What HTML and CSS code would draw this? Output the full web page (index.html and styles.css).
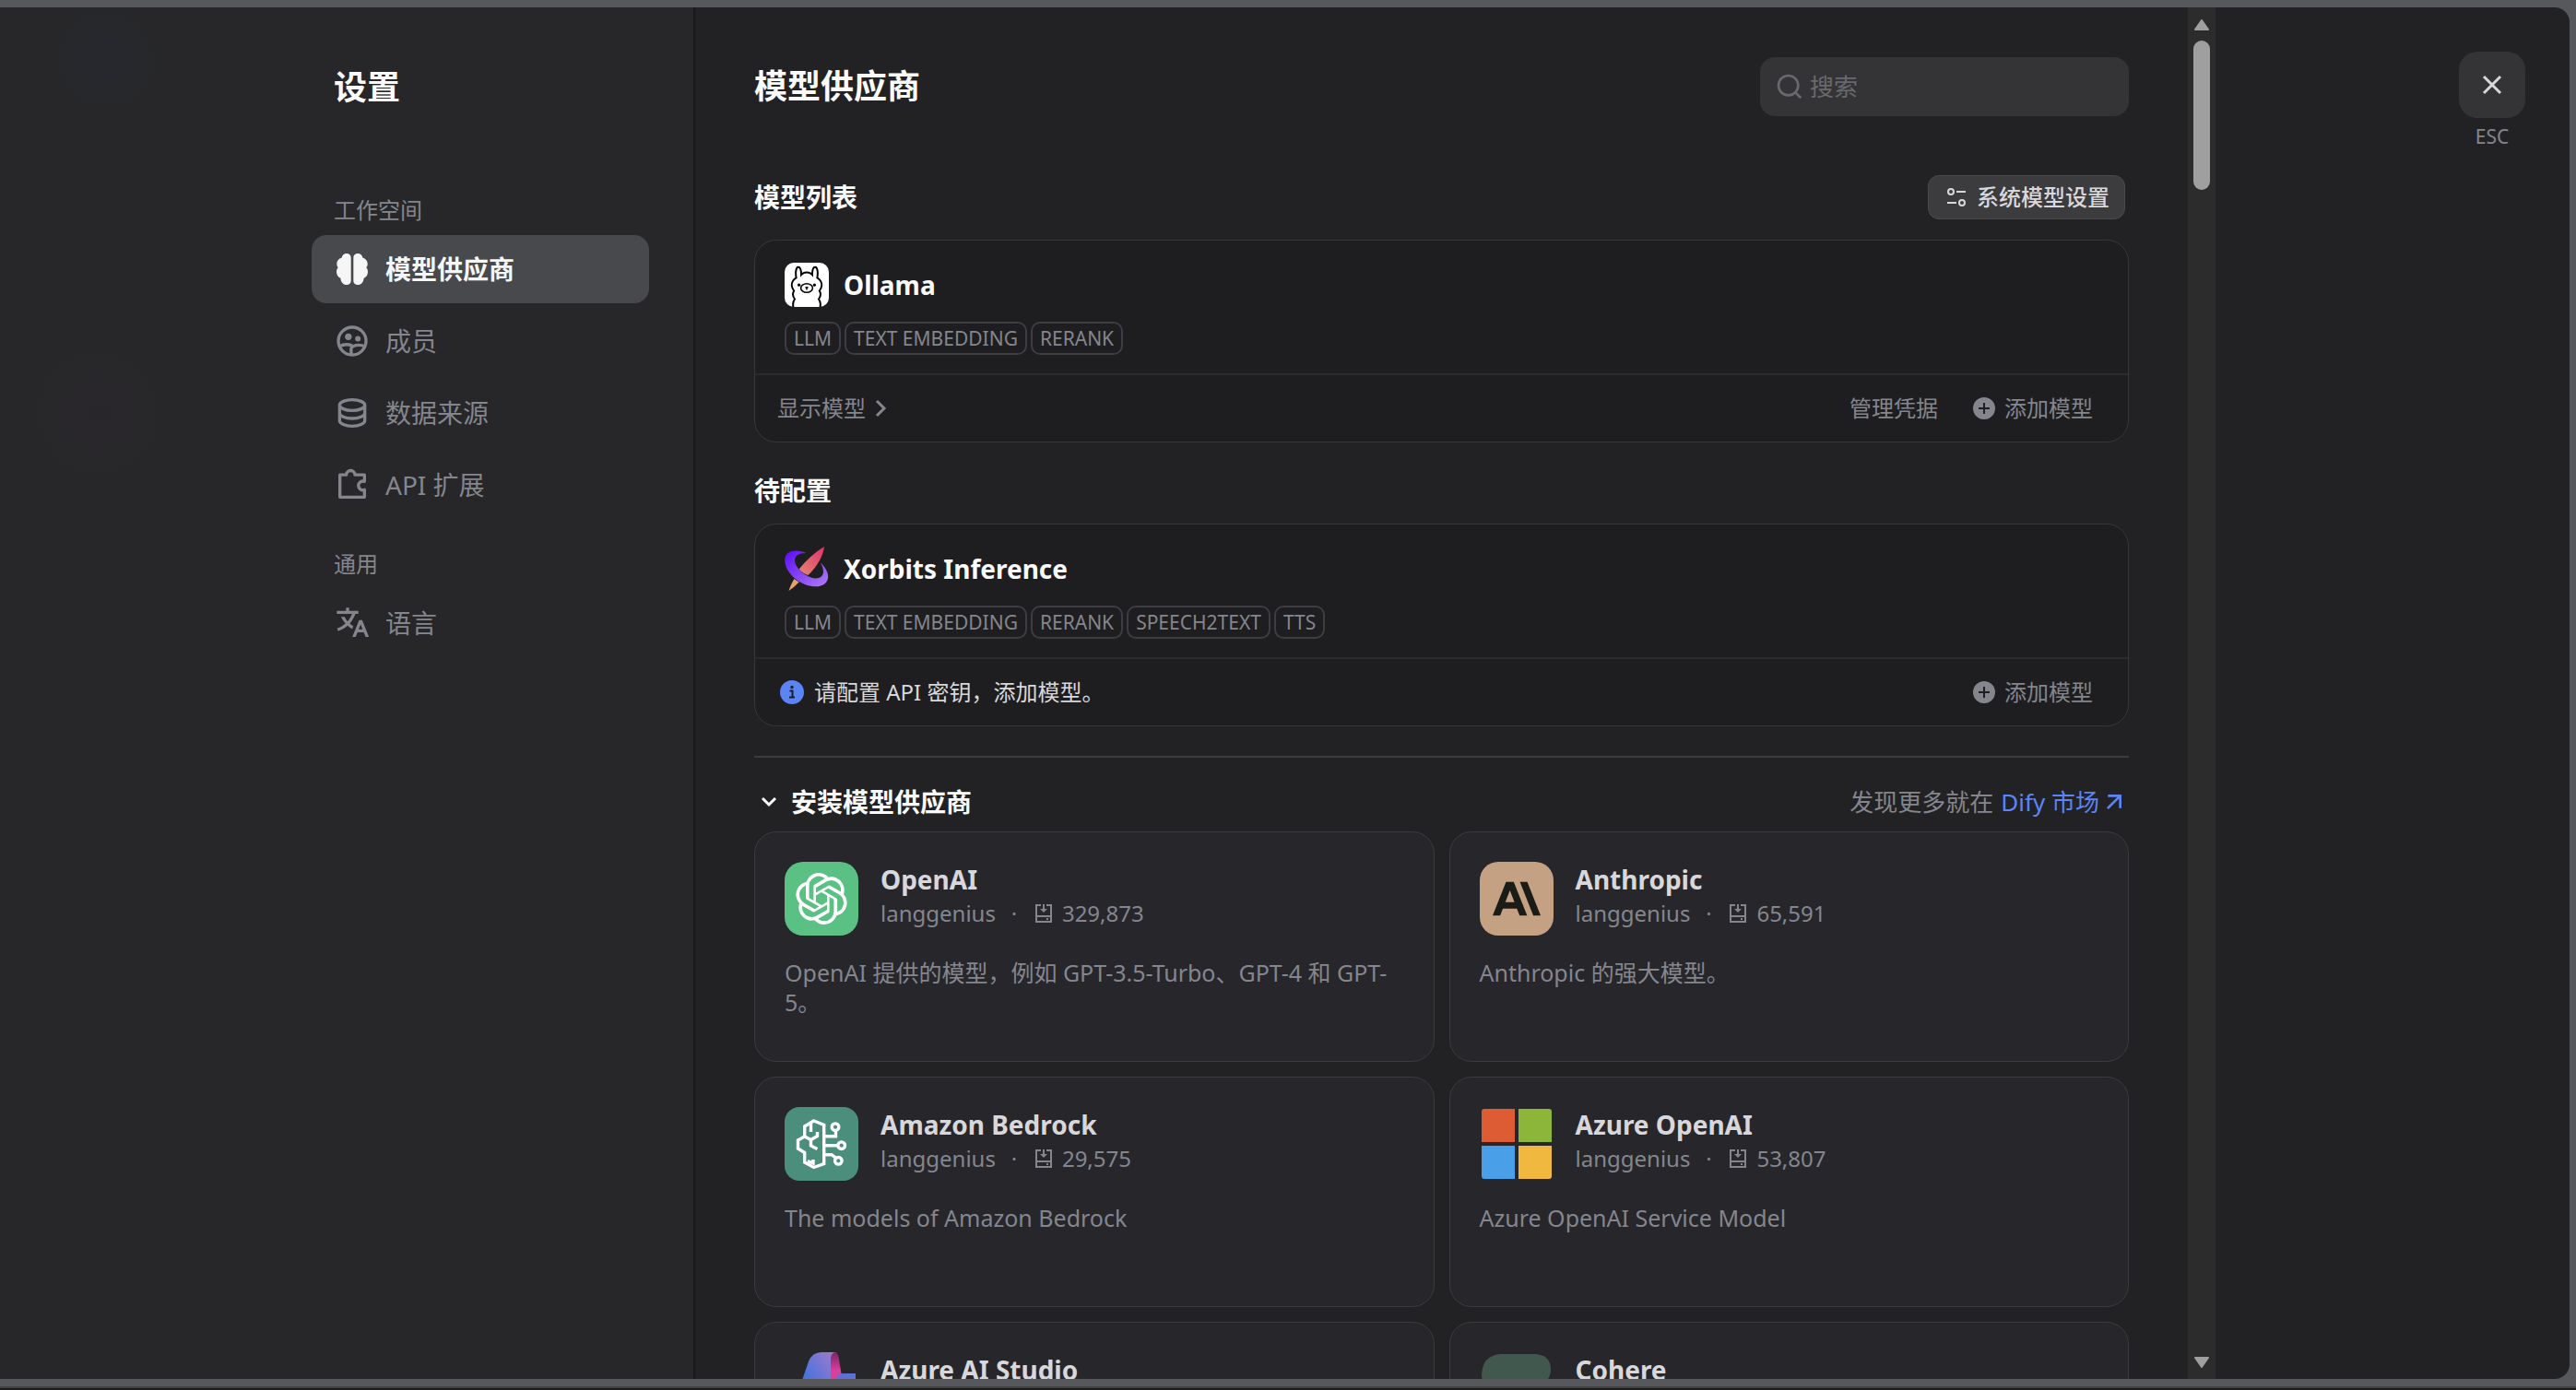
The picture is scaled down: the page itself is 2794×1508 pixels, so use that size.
FILE: index.html
```
<!DOCTYPE html>
<html lang="zh-CN">
<head>
    <meta charset="UTF-8">
    <meta name="viewport" content="width=device-width, initial-scale=1.0">
    <title>设置 - 模型供应商</title>
    <link rel="stylesheet" href="styles.css">
</head>
<body>
    <div class="settings">
        <aside class="sidebar">
            <h1 class="page-title">设置</h1>
            <nav class="menu">
                <div class="menu-label">工作空间</div>
                <a class="menu-item active" href="#provider">
                    <svg class="menu-icon" viewBox="0 0 24 24" fill="currentColor">
                        <path d="M11.2 4.5C11.2 2.8 9.9 1.8 8.4 1.8C6.7 1.8 5.4 2.9 5.2 4.5C3.4 5 2 6.6 2 8.6C2 9.6 2.3 10.3 2.8 11C2.2 11.7 1.8 12.7 1.8 13.8C1.8 15.7 2.9 17.2 4.4 17.8C4.6 20.4 6.2 22.2 8.4 22.2C10.1 22.2 11.2 21 11.2 19.6Z"/>
                        <path d="M12.8 4.5C12.8 2.8 14.1 1.8 15.6 1.8C17.3 1.8 18.6 2.9 18.8 4.5C20.6 5 22 6.6 22 8.6C22 9.6 21.7 10.3 21.2 11C21.8 11.7 22.2 12.7 22.2 13.8C22.2 15.7 21.1 17.2 19.6 17.8C19.4 20.4 17.8 22.2 15.6 22.2C13.9 22.2 12.8 21 12.8 19.6Z"/>
                    </svg>
                    模型供应商
                </a>
                <a class="menu-item" href="#members">
                    <svg class="menu-icon" viewBox="0 0 24 24" fill="none" stroke="currentColor" stroke-width="2">
                        <circle cx="12" cy="12" r="9"/>
                        <circle cx="9.5" cy="9.2" r="2.2" fill="currentColor" stroke="none"/>
                        <circle cx="15.7" cy="10.5" r="1.8" fill="currentColor" stroke="none"/>
                        <path d="M3.8 15.4C6 14.2 9.2 14 12 14.9M11.3 20.6V17.2C11.3 15.6 14 14.6 16.2 14.6C17.8 14.6 19.2 14.9 20.2 15.5"/>
                    </svg>
                    成员
                </a>
                <a class="menu-item" href="#datasource">
                    <svg class="menu-icon" viewBox="0 0 24 24" fill="none" stroke="currentColor" stroke-width="2">
                        <ellipse cx="12" cy="6.9" rx="8.2" ry="3.5"/>
                        <path d="M3.8 7v10c0 2 3.7 3.6 8.2 3.6s8.2-1.6 8.2-3.6V7M3.8 12c0 2 3.7 3.6 8.2 3.6s8.2-1.6 8.2-3.6"/>
                    </svg>
                    数据来源
                </a>
                <a class="menu-item" href="#api">
                    <svg class="menu-icon" viewBox="0 0 24 24" fill="none" stroke="currentColor" stroke-width="2" stroke-linejoin="round">
                        <path d="M4 5.500h4.200a2.800 2.800 0 1 1 5.600 0H20v4.300a2.900 2.900 0 1 0 0 5.400v4.800H4z"/>
                    </svg>
                    API 扩展
                </a>
                <div class="menu-label">通用</div>
                <a class="menu-item" href="#language">
                    <svg class="menu-icon" viewBox="0 0 24 24" fill="currentColor">
                        <path d="M18.5 10L22.9 21H20.745L19.544 18H15.454L14.255 21H12.101L16.5 10H18.5ZM10 2V4H16V6L14.0322 6.0006C13.2425 8.36616 11.9988 10.5057 10.4115 12.301C11.1344 12.9457 11.917 13.5176 12.7475 14.0079L11.9969 15.8855C10.9237 15.2781 9.91944 14.5524 8.99961 13.7249C7.21403 15.332 5.10914 16.5553 2.79891 17.2734L2.26257 15.3442C4.2385 14.7203 6.04543 13.6737 7.59042 12.3021C6.46277 11.0281 5.50873 9.57985 4.76742 8.00028L7.00684 8.00037C7.57018 9.03885 8.23979 10.0033 8.99967 10.877C10.2283 9.46508 11.2205 7.81616 11.9095 6.00101L2 6V4H8V2H10ZM17.5 12.8852L16.253 16H18.745L17.5 12.8852Z"/>
                    </svg>
                    语言
                </a>
            </nav>
        </aside>

        <main class="content">
            <header class="content-header">
                <h2 class="page-title">模型供应商</h2>
                <label class="search">
                    <svg class="search-icon" viewBox="0 0 24 24" fill="none" stroke="currentColor" stroke-width="2">
                        <circle cx="11" cy="11" r="8"/>
                        <path d="M16.8 16.8L21.2 21.2"/>
                    </svg>
                    <input type="text" placeholder="搜索" aria-label="搜索">
                </label>
            </header>

            <div class="section-row">
                <h3 class="section-title">模型列表</h3>
                <button class="system-btn">
                    <svg class="system-icon" viewBox="0 0 28 28" fill="none" stroke="currentColor" stroke-width="2">
                        <circle cx="8" cy="8" r="3"/>
                        <path d="M14 8H24M4 20H14"/>
                        <circle cx="20" cy="20" r="3"/>
                    </svg>
                    系统模型设置
                </button>
            </div>

            <section class="model-card">
                <div class="model-info">
                    <div class="model-name">
                        <svg class="model-logo" viewBox="0 0 48 48" fill="none" stroke="#000" stroke-width="2">
                            <rect width="48" height="48" rx="10" fill="#fff" stroke="none"/>
                            <path d="M9.5 48C8.5 44 9.5 41.5 11 39.5C8.8 36.5 8.6 33 10.2 30.5C7.5 27 7 22.5 9.2 19.5C10.2 18 11.4 17 12.6 16.4C11.6 11 12.2 5 14.8 4.8C17.4 4.8 18 9 18 13C20.8 9.6 27.2 9.6 30 13C30 9 30.6 4.8 33.2 4.8C35.8 5 36.4 11 35.4 16.4C36.6 17 37.8 18 38.8 19.5C41 22.5 40.5 27 37.8 30.5C39.4 33 39.2 36.5 37 39.5C38.5 41.5 39.5 44 38.5 48"/>
                            <ellipse cx="24" cy="27.5" rx="6.4" ry="4.8" stroke-width="1.5"/>
                            <path d="M22.6 26.4L24 27.6L25.4 26.4M24 27.6V29.4" stroke-width="1.4"/>
                            <circle cx="15.6" cy="24.2" r="1.6" fill="#000" stroke="none"/>
                            <circle cx="32.4" cy="24.2" r="1.6" fill="#000" stroke="none"/>
                        </svg>
                        Ollama
                    </div>
                    <ul class="tags">
                        <li>LLM</li>
                        <li>TEXT EMBEDDING</li>
                        <li>RERANK</li>
                    </ul>
                </div>
                <div class="model-footer">
                    <button class="text-btn show-btn">
                        显示模型
                        <svg class="small-icon" viewBox="0 0 24 24" fill="none" stroke="currentColor" stroke-width="3"><path d="M6 4L14 12L6 20"/></svg>
                    </button>
                    <div class="actions">
                        <button class="text-btn">管理凭据</button>
                        <button class="text-btn">
                            <svg class="add-icon" viewBox="0 0 24 24">
                                <circle cx="12" cy="12" r="12" fill="currentColor"/>
                                <path d="M12 6V18M6 12H18" stroke="#1e1e20" stroke-width="2"/>
                            </svg>
                            添加模型
                        </button>
                    </div>
                </div>
            </section>

            <h3 class="section-title pending">待配置</h3>
            <section class="model-card">
                <div class="model-info">
                    <div class="model-name">
                        <svg class="model-logo" viewBox="0 0 48 48">
                            <defs>
                                <linearGradient id="ring" x1="0" y1="0" x2="1" y2="1">
                                    <stop offset="0" stop-color="#5a0cf5"/>
                                    <stop offset="1" stop-color="#b07cf5"/>
                                </linearGradient>
                                <linearGradient id="needle" x1="1" y1="0" x2="0" y2="1">
                                    <stop offset="0" stop-color="#e0336e"/>
                                    <stop offset="1" stop-color="#e2876c"/>
                                </linearGradient>
                            </defs>
                            <path fill="url(#ring)" d="M23.5 7C16 3.6 7 3.4 2.5 8C-3 15 2 28 13 36C23 43.5 37 46 44 40C50 34 47 25 39 17.5C43.5 26 43 32 37 34C30 36 19 30 13.5 22C9 15 10 7 23.5 7Z"/>
                            <path fill="url(#needle)" d="M43 0C42 9 36 21 25.5 31C22 30 18.5 27.5 15.7 24.5C23 15 33 6 43 0Z"/>
                            <path fill="#e9a06a" d="M10.5 35C12 36.5 14 37.5 15.7 38.3C12.5 42 8 46 4.5 48C6 43.5 8 38.5 10.5 35Z"/>
                        </svg>
                        Xorbits Inference
                    </div>
                    <ul class="tags">
                        <li>LLM</li>
                        <li>TEXT EMBEDDING</li>
                        <li>RERANK</li>
                        <li>SPEECH2TEXT</li>
                        <li>TTS</li>
                    </ul>
                </div>
                <div class="model-footer">
                    <p class="notice">
                        <svg class="info-icon" viewBox="0 0 28 28">
                            <circle cx="14" cy="14" r="13" fill="#5b84f5"/>
                            <path d="M11.5 12.5H14.5V19M11 19.5H17" fill="none" stroke="#1e1e20" stroke-width="2"/>
                            <circle cx="14" cy="8.5" r="1.7" fill="#1e1e20"/>
                        </svg>
                        请配置 API 密钥，添加模型。
                    </p>
                    <div class="actions">
                        <button class="text-btn">
                            <svg class="add-icon" viewBox="0 0 24 24">
                                <circle cx="12" cy="12" r="12" fill="currentColor"/>
                                <path d="M12 6V18M6 12H18" stroke="#1e1e20" stroke-width="2"/>
                            </svg>
                            添加模型
                        </button>
                    </div>
                </div>
            </section>

            <hr class="divider">

            <div class="section-row install-row">
                <h3 class="section-title">
                    <button class="collapse-btn">
                        <svg class="collapse-icon" viewBox="0 0 24 24" fill="none" stroke="currentColor" stroke-width="3"><path d="M5 8L12 15L19 8"/></svg>
                        安装模型供应商
                    </button>
                </h3>
                <p class="discover">
                    <span>发现更多就在</span>
                    <a href="#marketplace">Dify 市场<svg class="arrow-icon" viewBox="0 0 24 24" fill="currentColor"><path d="M16.0037 9.41421L7.39712 18.0208L5.98291 16.6066L14.5895 8H7.00373V6H18.0037V17H16.0037V9.41421Z"/></svg></a>
                </p>
            </div>

            <svg class="symbols" aria-hidden="true">
                <symbol id="install" viewBox="0 0 24 24">
                    <path d="M9 2V4H5V14H19V4H15V2H21V22H3V2H9ZM19 16H5V20H19V16ZM17 17V19H15V17H17ZM13 2V7H16L12 11L8 7H11V2H13Z"/>
                </symbol>
            </svg>

            <div class="provider-grid">
                <article class="provider-card">
                    <div class="provider-head">
                        <svg class="provider-logo" viewBox="0 0 80 80">
                            <rect width="80" height="80" rx="20" fill="#5ac084"/>
                            <svg x="12" y="12" width="56" height="56" viewBox="0 0 24 24" fill="#fff">
                                <path d="M22.2819 9.8211a5.9847 5.9847 0 0 0-.5157-4.9108 6.0462 6.0462 0 0 0-6.5098-2.9A6.0651 6.0651 0 0 0 4.9807 4.1818a5.9847 5.9847 0 0 0-3.9977 2.9 6.0462 6.0462 0 0 0 .7427 7.0966 5.98 5.98 0 0 0 .511 4.9107 6.051 6.051 0 0 0 6.5146 2.9001A5.9847 5.9847 0 0 0 13.2599 24a6.0557 6.0557 0 0 0 5.7718-4.2058 5.9894 5.9894 0 0 0 3.9977-2.9001 6.0557 6.0557 0 0 0-.7475-7.0729zm-9.022 12.6081a4.4755 4.4755 0 0 1-2.8764-1.0408l.1419-.0804 4.7783-2.7582a.7948.7948 0 0 0 .3927-.6813v-6.7369l2.02 1.1686a.071.071 0 0 1 .038.052v5.5826a4.504 4.504 0 0 1-4.4945 4.4944zm-9.6607-4.1254a4.4708 4.4708 0 0 1-.5346-3.0137l.142.0852 4.783 2.7582a.7712.7712 0 0 0 .7806 0l5.8428-3.3685v2.3324a.0804.0804 0 0 1-.0332.0615L9.74 19.9502a4.4992 4.4992 0 0 1-6.1408-1.6464zM2.3408 7.8956a4.485 4.485 0 0 1 2.3655-1.9728V11.6a.7664.7664 0 0 0 .3879.6765l5.8144 3.3543-2.0201 1.1685a.0757.0757 0 0 1-.071 0l-4.8303-2.7865A4.504 4.504 0 0 1 2.3408 7.872zm16.5963 3.8558L13.1038 8.364 15.1192 7.2a.0757.0757 0 0 1 .071 0l4.8303 2.7913a4.4944 4.4944 0 0 1-.6765 8.1042v-5.6772a.79.79 0 0 0-.407-.667zm2.0107-3.0231l-.142-.0852-4.7735-2.7818a.7759.7759 0 0 0-.7854 0L9.409 9.2297V6.8974a.0662.0662 0 0 1 .0284-.0615l4.8303-2.7866a4.4992 4.4992 0 0 1 6.6802 4.66zM8.3065 12.863l-2.02-1.1638a.0804.0804 0 0 1-.038-.0567V6.0742a4.4992 4.4992 0 0 1 7.3757-3.4537l-.142.0805L8.704 5.459a.7948.7948 0 0 0-.3927.6813zm1.0976-2.3654l2.602-1.4998 2.6069 1.4998v2.9994l-2.5974 1.4997-2.6067-1.4997Z"/>
                            </svg>
                        </svg>
                        <div>
                            <h4 class="provider-name">OpenAI</h4>
                            <div class="provider-meta">langgenius<span class="dot">·</span><svg class="install-icon"><use href="#install"/></svg>329,873</div>
                        </div>
                    </div>
                    <p class="provider-desc">OpenAI 提供的模型，例如 GPT-3.5-Turbo、GPT-4 和 GPT-5。</p>
                </article>

                <article class="provider-card">
                    <div class="provider-head">
                        <svg class="provider-logo" viewBox="0 0 80 80">
                            <rect width="80" height="80" rx="20" fill="#c4a182"/>
                            <svg x="14" y="14" width="52" height="52" viewBox="0 0 24 24" fill="#1b1b18">
                                <path d="M17.3041 3.541h-3.6718l6.696 16.918H24Zm-10.6082 0L0 20.459h3.7442l1.3693-3.5527h7.0052l1.3693 3.5528h3.7442L10.5363 3.5409Zm-.3712 10.2232 2.2914-5.9456 2.2914 5.9456Z"/>
                            </svg>
                        </svg>
                        <div>
                            <h4 class="provider-name">Anthropic</h4>
                            <div class="provider-meta">langgenius<span class="dot">·</span><svg class="install-icon"><use href="#install"/></svg>65,591</div>
                        </div>
                    </div>
                    <p class="provider-desc">Anthropic 的强大模型。</p>
                </article>

                <article class="provider-card">
                    <div class="provider-head">
                        <svg class="provider-logo" viewBox="0 0 80 80" fill="none" stroke="#fff" stroke-width="3.4">
                            <rect width="80" height="80" rx="16" fill="#4b8e7c" stroke="none"/>
                            <path d="M31.7 15L42.7 19.5V61.5L31.7 65.5L21.7 60V49.5L14.5 45V36L21.7 32V21Z"/>
                            <path d="M28.5 18V27M21.7 32L28.5 35.5L35.5 31.5V27M28.5 35.5V42L35.5 45.5M25 58.5L31 61V57"/>
                            <path d="M42.7 31.7H55.5V26M42.7 41.7H57.5M42.7 51.7H51L56 55.5"/>
                            <circle cx="55" cy="21.7" r="3.8"/>
                            <circle cx="61.7" cy="41.7" r="3.8"/>
                            <circle cx="58.3" cy="58.3" r="3.8"/>
                        </svg>
                        <div>
                            <h4 class="provider-name">Amazon Bedrock</h4>
                            <div class="provider-meta">langgenius<span class="dot">·</span><svg class="install-icon"><use href="#install"/></svg>29,575</div>
                        </div>
                    </div>
                    <p class="provider-desc">The models of Amazon Bedrock</p>
                </article>

                <article class="provider-card">
                    <div class="provider-head">
                        <svg class="provider-logo" viewBox="0 0 80 80">
                            <path fill="#dd5c33" d="M5 2H38V38H2V5Q2 2 5 2Z"/>
                            <path fill="#8cb63a" d="M42 2H75Q78 2 78 5V38H42Z"/>
                            <path fill="#4aa0e8" d="M2 42H38V78H5Q2 78 2 75Z"/>
                            <path fill="#f1b840" d="M42 42H78V75Q78 78 75 78H42Z"/>
                        </svg>
                        <div>
                            <h4 class="provider-name">Azure OpenAI</h4>
                            <div class="provider-meta">langgenius<span class="dot">·</span><svg class="install-icon"><use href="#install"/></svg>53,807</div>
                        </div>
                    </div>
                    <p class="provider-desc">Azure OpenAI Service Model</p>
                </article>

                <article class="provider-card">
                    <div class="provider-head">
                        <svg class="provider-logo" viewBox="0 0 80 80">
                            <defs>
                                <linearGradient id="studio-blue" x1="1" y1="0" x2="0" y2="1">
                                    <stop offset="0" stop-color="#a57bc8"/>
                                    <stop offset="0.5" stop-color="#4673e0"/>
                                    <stop offset="1" stop-color="#2f7be8"/>
                                </linearGradient>
                                <linearGradient id="studio-pink" x1="0" y1="0" x2="0" y2="1">
                                    <stop offset="0" stop-color="#7c2468"/>
                                    <stop offset="0.4" stop-color="#d8409c"/>
                                </linearGradient>
                            </defs>
                            <path fill="url(#studio-blue)" d="M40 0H56L50 30V56Q50 80 26 80H10Q2 80 5 71L26 10Q30 0 40 0Z"/>
                            <path fill="url(#studio-pink)" d="M56 0Q50 0 50 8V50H66L60 14Q58 0 56 0Z"/>
                            <path fill="#5b70d8" d="M62 23H77V58Q77 66 68 66H50V50Q54 23 62 23Z"/>
                        </svg>
                        <h4 class="provider-name">Azure AI Studio</h4>
                    </div>
                </article>

                <article class="provider-card">
                    <div class="provider-head">
                        <svg class="provider-logo" viewBox="0 0 80 80">
                            <path fill="#40584d" d="M22 2H60Q77 3 77 19Q77 32 62 37Q46 43 26 43Q2 42 2 24Q3 4 22 2Z"/>
                        </svg>
                        <h4 class="provider-name">Cohere</h4>
                    </div>
                </article>
            </div>
        </main>

        <div class="scrollbar" aria-hidden="true">
            <svg class="scroll-arrow" viewBox="0 0 16 12"><path d="M8 1L15 11H1Z" stroke-width="2" stroke-linejoin="round"/></svg>
            <div class="scroll-thumb"></div>
            <svg class="scroll-arrow down" viewBox="0 0 16 12"><path d="M8 11L15 1H1Z" stroke-width="2" stroke-linejoin="round"/></svg>
        </div>

        <div class="close-area">
            <button class="close-btn" aria-label="关闭">
                <svg class="close-icon" viewBox="0 0 24 24" fill="none" stroke="currentColor" stroke-width="3"><path d="M3 3L21 21M21 3L3 21"/></svg>
            </button>
            <div class="close-hint">ESC</div>
        </div>
    </div>
    <div class="window-edge"></div>
</body>
</html>
```
FILE: styles.css
```
* {
    box-sizing: border-box;
    margin: 0;
    padding: 0;
}
body {
    display: flex;
    flex-direction: column;
    height: 100vh;
    padding-top: 8px;
    overflow: hidden;
    background: #57585c;
    color: #fbfbfc;
    font-family: "Noto Sans", "Noto Sans CJK SC", sans-serif;
    font-size: 24px;
    line-height: 32px;
}
button {
    border: none;
    background: none;
    color: inherit;
    font: inherit;
    cursor: pointer;
}
a {
    text-decoration: none;
}
ul {
    list-style: none;
}
svg {
    flex-shrink: 0;
}

.settings {
    display: grid;
    grid-template-columns: 754px minmax(0, 1fr) 30px 384px;
    flex: 1;
    min-height: 0;
    margin-right: 7px;
    margin-bottom: 8px;
    overflow: hidden;
    border-radius: 0 16px 16px 0;
    background: #222224;
}
.window-edge {
    height: 4px;
    border-top: 2px solid #414143;
    background: #1b1b1b;
}
.page-title {
    font-size: 36px;
    font-weight: 700;
    line-height: 48px;
}

/* sidebar */
.sidebar {
    padding: 63px 48px 0 338px;
    border-right: 2px solid #19191b;
    background:
        radial-gradient(circle at 116px 56px, #26282e, transparent 60px),
        radial-gradient(circle at 106px 440px, #29262b, transparent 70px),
        #272729;
}
.sidebar .page-title {
    padding-left: 24px;
}
.menu {
    display: flex;
    flex-direction: column;
    gap: 4px;
    padding-top: 64px;
}
.menu-label {
    padding: 29px 24px 7px;
    color: #85868d;
}
.menu-item {
    display: flex;
    align-items: center;
    gap: 16px;
    height: 74px;
    padding: 0 24px;
    border-radius: 16px;
    color: #85868d;
    font-size: 28px;
}
.menu-item.active {
    background: #48494c;
    color: #f6f6f7;
    font-weight: 700;
}
.menu-icon {
    width: 40px;
    height: 40px;
}

/* content */
.content {
    padding: 54px 64px 0;
    overflow: hidden;
}
.content-header {
    display: flex;
    align-items: center;
    justify-content: space-between;
    margin-bottom: 64px;
}
.search {
    display: flex;
    align-items: center;
    gap: 6px;
    width: 400px;
    height: 64px;
    padding: 0 16px;
    border-radius: 16px;
    background: #343436;
    color: #68696f;
}
.search-icon {
    width: 32px;
    height: 32px;
}
.search input {
    flex: 1;
    min-width: 0;
    border: none;
    outline: none;
    background: none;
    color: #fbfbfc;
    font: inherit;
    font-size: 26px;
}
.search input::placeholder {
    color: #68696f;
}
.section-row {
    display: flex;
    align-items: center;
    justify-content: space-between;
    margin-bottom: 22px;
}
.section-title {
    font-size: 28px;
    font-weight: 700;
    line-height: 40px;
}
.pending {
    margin: 32px 0 16px;
}
.system-btn {
    display: flex;
    align-items: center;
    gap: 8px;
    height: 48px;
    margin-right: 4px;
    padding: 0 16px;
    border: 1px solid #4b4b4e;
    border-radius: 12px;
    background: #3c3c3e;
    color: #d8d8dc;
    font-weight: 500;
}
.system-icon {
    width: 28px;
    height: 28px;
}

/* installed models */
.model-card {
    border: 1px solid #37373a;
    border-radius: 24px;
    background: #1e1e20;
}
.model-info {
    padding: 24px 32px 20px;
    border-bottom: 2px solid #2b2b2d;
}
.model-name {
    display: flex;
    align-items: center;
    gap: 16px;
    height: 48px;
    margin-bottom: 16px;
    font-size: 28px;
    font-weight: 700;
}
.model-logo {
    width: 48px;
    height: 48px;
}
.tags {
    display: flex;
    gap: 4px;
}
.tags li {
    height: 36px;
    padding: 0 8px;
    border: 2px solid #3d3d43;
    border-radius: 10px;
    color: #85868d;
    font-size: 21px;
}
.model-footer {
    display: flex;
    align-items: center;
    justify-content: space-between;
    height: 72px;
    padding: 0 38px 0 24px;
}
.actions {
    display: flex;
    gap: 38px;
}
.text-btn {
    display: flex;
    align-items: center;
    gap: 10px;
    color: #85868d;
}
.show-btn {
    gap: 6px;
}
.small-icon,
.add-icon {
    width: 24px;
    height: 24px;
}
.notice {
    display: flex;
    align-items: center;
    gap: 10px;
    padding-left: 2px;
    color: #d8d8dc;
}
.info-icon {
    width: 28px;
    height: 28px;
}

/* marketplace */
.divider {
    height: 2px;
    margin: 32px 0 28px;
    border: none;
    background: #3b3b41;
}
.install-row {
    margin-bottom: 12px;
}
.collapse-btn {
    display: flex;
    align-items: center;
    gap: 12px;
    padding-left: 4px;
}
.collapse-icon {
    width: 24px;
    height: 24px;
}
.discover {
    display: flex;
    gap: 8px;
    color: #85868d;
    font-size: 26px;
}
.discover a {
    display: flex;
    align-items: center;
    color: #5b84f5;
}
.arrow-icon {
    width: 32px;
    height: 32px;
}
.symbols {
    display: none;
}
.provider-grid {
    display: grid;
    grid-template-columns: repeat(2, minmax(0, 1fr));
    grid-auto-rows: 250px;
    gap: 16px;
}
.provider-card {
    padding: 32px;
    border: 1px solid #3b3b3f;
    border-radius: 24px;
    background: #27272b;
}
.provider-head {
    display: flex;
    gap: 24px;
    margin-bottom: 24px;
}
.provider-logo {
    width: 80px;
    height: 80px;
}
.provider-name {
    color: #d8d8dc;
    font-size: 28px;
    font-weight: 700;
    line-height: 38px;
}
.provider-meta {
    display: flex;
    align-items: center;
    color: #85868d;
    line-height: 36px;
}
.dot {
    width: 40px;
    text-align: center;
}
.install-icon {
    width: 24px;
    height: 24px;
    margin-right: 8px;
    fill: currentColor;
}
.provider-desc {
    color: #85868d;
    font-size: 25px;
}

/* scrollbar */
.scrollbar {
    display: flex;
    flex-direction: column;
    align-items: center;
    padding: 13px 0 12px;
    background: #2c2c2c;
}
.scroll-arrow {
    width: 16px;
    height: 12px;
    fill: #9f9f9f;
    stroke: #9f9f9f;
}
.scroll-arrow.down {
    margin-top: auto;
}
.scroll-thumb {
    width: 18px;
    height: 162px;
    margin-top: 11px;
    border-radius: 9px;
    background: #9f9f9f;
}

/* close */
.close-area {
    display: flex;
    flex-direction: column;
    align-items: center;
    justify-self: end;
    width: 168px;
    padding-top: 48px;
}
.close-btn {
    display: flex;
    align-items: center;
    justify-content: center;
    width: 72px;
    height: 72px;
    border-radius: 20px;
    background: #343436;
    color: #d8d8dc;
}
.close-icon {
    width: 24px;
    height: 24px;
}
.close-hint {
    margin-top: 4px;
    color: #85868d;
    font-size: 21px;
}
```
